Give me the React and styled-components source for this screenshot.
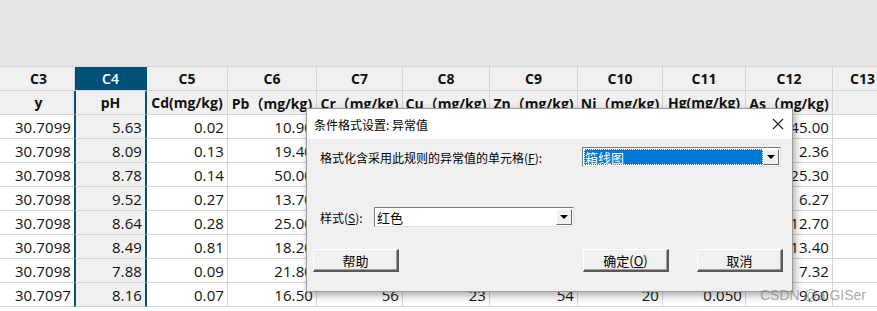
import React from 'react';
import styled, { createGlobalStyle } from 'styled-components';

const Global = createGlobalStyle`
  html, body { margin: 0; padding: 0; background: #ffffff; }
  body { width: 877px; height: 311px; overflow: hidden; font-family: "Open Sans", "Noto Sans CJK SC", sans-serif; }
`;

const widths = [3, 72, 72, 81, 89, 86, 87, 88, 85, 83, 87, 60];
const cols = ['', 'C3', 'C4', 'C5', 'C6', 'C7', 'C8', 'C9', 'C10', 'C11', 'C12', 'C13'];
const names = ['', 'y', 'pH', 'Cd(mg/kg)', 'Pb（mg/kg)', 'Cr（mg/kg)', 'Cu（mg/kg)', 'Zn（mg/kg)', 'Ni（mg/kg)', 'Hg(mg/kg)', 'As（mg/kg)', ''];

const rows = [
  ['30.7099', '5.63', '0.02', '10.90', '78', '31', '92', '34', '0.120', '45.00'],
  ['30.7098', '8.09', '0.13', '19.40', '64', '27', '71', '29', '0.080', '2.36'],
  ['30.7098', '8.78', '0.14', '50.00', '82', '35', '88', '31', '0.090', '25.30'],
  ['30.7098', '9.52', '0.27', '13.70', '59', '22', '63', '24', '0.060', '6.27'],
  ['30.7098', '8.64', '0.28', '25.00', '71', '28', '75', '27', '0.070', '12.70'],
  ['30.7098', '8.49', '0.81', '18.20', '66', '25', '68', '23', '0.040', '13.40'],
  ['30.7098', '7.88', '0.09', '21.80', '62', '24', '60', '22', '0.050', '7.32'],
  ['30.7097', '8.16', '0.07', '16.50', '56', '23', '54', '20', '0.050', '9.60'],
];

const Page = styled.div`
  position: relative;
  width: 877px;
  height: 311px;
  overflow: hidden;
  background: #ffffff;
`;

const TopBar = styled.div`
  height: 67px;
  background: #e6e6e6;
  border-bottom: 1px solid #d6d6d6;
  box-sizing: border-box;
`;

const Sheet = styled.div`
  display: grid;
  grid-template-columns: ${widths.map((w) => w + 'px').join(' ')};
  grid-auto-rows: 24px;
`;

const Cell = styled.div`
  box-sizing: border-box;
  border-right: 1px solid #d4d4d4;
  border-bottom: 1px solid #d4d4d4;
  display: flex;
  align-items: center;
  justify-content: ${(p) => (p.$head ? 'center' : 'flex-end')};
  padding: 0 3px;
  font-size: ${(p) => (p.$head ? '14px' : '15px')};
  font-weight: ${(p) => (p.$head ? 700 : 400)};
  letter-spacing: ${(p) => (p.$head ? '0' : '0.1px')};
  color: #111;
  white-space: nowrap;
  overflow: hidden;
  background: ${(p) => (p.$head ? '#f0f0f0' : p.$sel ? '#f0f0f0' : '#ffffff')};
  ${(p) => p.$selHead && `background: #00507a; color: #ffffff; font-weight: 600; border-right-color: #00507a;`}
  ${(p) => p.$sel && `border-left: 2px solid #0b4f73; border-right: 2px solid #0b4f73; margin-left: -1px;`}
`;

const Dialog = styled.div`
  position: absolute;
  left: 306px;
  top: 108px;
  width: 485px;
  height: 182px;
  background: #f0f0f0;
  border: 1px solid #9a9a9a;
  box-shadow: 2px 3px 8px rgba(0, 0, 0, 0.35);
  font-family: "Noto Sans CJK SC", "Open Sans", sans-serif;
  font-size: 12px;
  color: #000;
  display: flex;
  flex-direction: column;
`;

const TitleBar = styled.div`
  height: 30px;
  background: #ffffff;
  display: flex;
  align-items: center;
  justify-content: space-between;
  padding: 0 8px 0 7px;
`;

const Body = styled.div`
  flex: 1;
  display: flex;
  flex-direction: column;
  padding: 8px 9px 0 6px;
`;

const Row = styled.div`
  display: flex;
  align-items: center;
  height: 20px;
  margin-top: ${(p) => p.$mt || 0}px;
  padding-left: ${(p) => p.$pl || 0}px;
`;

const Label = styled.span`
  width: ${(p) => p.$w}px;
  flex: none;
  white-space: nowrap;
`;

const Key = styled.span`
  text-decoration: underline;
`;

const Combo = styled.div`
  width: ${(p) => p.$w}px;
  height: 20px;
  box-sizing: border-box;
  border: 1px solid #7a7a7a;
  border-right-color: #e0e0e0;
  border-bottom-color: #e0e0e0;
  background: #ffffff;
  display: flex;
  align-items: stretch;
  padding: 1px;
`;

const ComboText = styled.div`
  flex: 1;
  display: flex;
  align-items: center;
  padding-left: 1px;
  font-size: 13px;
  background: ${(p) => (p.$active ? '#0078d7' : '#ffffff')};
  color: ${(p) => (p.$active ? '#ffffff' : '#000')};
  outline: ${(p) => (p.$active ? '1px dotted #ffffff' : 'none')};
  outline-offset: -1px;
`;

const Arrow = styled.div`
  width: 16px;
  background: #f0f0f0;
  border: 1px solid #ffffff;
  border-right-color: #696969;
  border-bottom-color: #696969;
  box-sizing: border-box;
  display: flex;
  align-items: center;
  justify-content: center;
  &::after {
    content: '';
    border-left: 4px solid transparent;
    border-right: 4px solid transparent;
    border-top: 4px solid #000;
  }
`;

const Buttons = styled.div`
  display: flex;
  align-items: center;
  margin-top: 22px;
`;

const Button = styled.div`
  width: 86px;
  height: 23px;
  box-sizing: border-box;
  background: #f0f0f0;
  border: 1px solid #ffffff;
  border-right: 2px solid #5a5a5a;
  border-bottom: 2px solid #5a5a5a;
  box-shadow: inset -1px -1px 0 #a0a0a0;
  display: flex;
  align-items: center;
  justify-content: center;
  font-size: 13px;
  margin-left: ${(p) => p.$ml || 0}px;
`;

const Watermark = styled.div`
  position: absolute;
  left: 760px;
  top: 287px;
  font-family: "Liberation Sans", sans-serif;
  font-size: 14px;
  color: rgba(120, 120, 120, 0.65);
  white-space: nowrap;
`;

const CloseIcon = () => (
  <svg width="12" height="12" viewBox="0 0 12 12">
    <path d="M1 1 L11 11 M11 1 L1 11" stroke="#222" strokeWidth="1.1" />
  </svg>
);

export default function App() {
  return (
    <Page>
      <Global />
      <TopBar />
      <Sheet>
        {cols.map((c, i) => (
          <Cell key={'c' + i} $head $selHead={i === 2}>{c}</Cell>
        ))}
        {names.map((n, i) => (
          <Cell key={'n' + i} $head $sel={i === 2}>{n}</Cell>
        ))}
        {rows.map((r, ri) => (
          <React.Fragment key={ri}>
            <Cell />
            {r.map((v, ci) => (
              <Cell key={ci} $sel={ci === 1}>{v}</Cell>
            ))}
            <Cell />
          </React.Fragment>
        ))}
      </Sheet>
      <Dialog>
        <TitleBar>
          <span>条件格式设置: 异常值</span>
          <CloseIcon />
        </TitleBar>
        <Body>
          <Row $pl={7}>
            <Label $w={262}>格式化含采用此规则的异常值的单元格(<Key>F</Key>):</Label>
            <Combo $w={199}>
              <ComboText $active>箱线图</ComboText>
              <Arrow />
            </Combo>
          </Row>
          <Row $mt={40} $pl={7}>
            <Label $w={54}>样式(<Key>S</Key>):</Label>
            <Combo $w={200}>
              <ComboText>红色</ComboText>
              <Arrow />
            </Combo>
          </Row>
          <Buttons>
            <Button>帮助</Button>
            <Button $ml={184}>确定(<Key>O</Key>)</Button>
            <Button $ml={28}>取消</Button>
          </Buttons>
        </Body>
      </Dialog>
      <Watermark>CSDN @a GISer</Watermark>
    </Page>
  );
}
